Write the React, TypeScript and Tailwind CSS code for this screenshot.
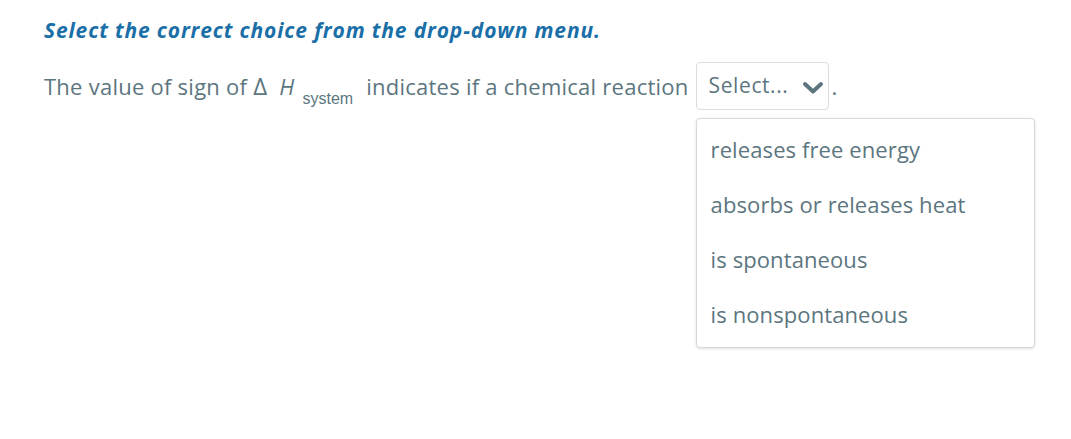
import React from 'react';

const options = [
  'releases free energy',
  'absorbs or releases heat',
  'is spontaneous',
  'is nonspontaneous',
];

const Chevron = () => (
  <svg width="22" height="14" viewBox="0 0 22 14" className="ml-[14px] mt-[4px]">
    <path d="M3 3 L11 10.5 L19 3" fill="none" stroke="#5c7680" strokeWidth="4" strokeLinecap="round" strokeLinejoin="round" />
  </svg>
);

export default function App() {
  return (
    <div className="w-[1071px] h-[439px] bg-white px-[44px] pt-[14px] font-['Open_Sans','Noto_Sans',sans-serif]">
      <h1 className="text-[21px] font-bold italic text-[#1a6fa8] leading-[32px] tracking-[0.85px]">
        Select the correct choice from the drop-down menu.
      </h1>

      <div className="mt-[16px] flex items-start text-[22px] text-[#5c7680] tracking-[0.25px]">
        <span className="leading-[48px]">
          The value of sign of <span className="text-[24px]">Δ</span> <span className="italic ml-[6px]">H</span>
          <span className="relative top-[9px] text-[16px] tracking-normal font-['Liberation_Sans',sans-serif] ml-[8px]">system</span>
          <span className="ml-[13px]">indicates if a chemical reaction</span>
        </span>

        <div className="relative ml-[7px]">
          <div className="h-[48px] flex items-center border border-[#dcdcdc] rounded-[4px] pl-[12px] pr-[4px] text-[21px] tracking-[0.6px]">
            Select...
            <Chevron />
          </div>
          <div className="absolute left-0 top-[56px] w-[339px] bg-white border border-[#d8d8d8] rounded-[4px] shadow-[0_1px_3px_rgba(0,0,0,0.12)] pt-[3px] pb-[5px]">
            {options.map((o) => (
              <div key={o} className="h-[55px] flex items-center px-[14px] text-[22px] tracking-[0.1px] text-[#5c7680]">
                {o}
              </div>
            ))}
          </div>
        </div>
        <span className="leading-[48px] ml-[2px]">.</span>
      </div>
    </div>
  );
}
